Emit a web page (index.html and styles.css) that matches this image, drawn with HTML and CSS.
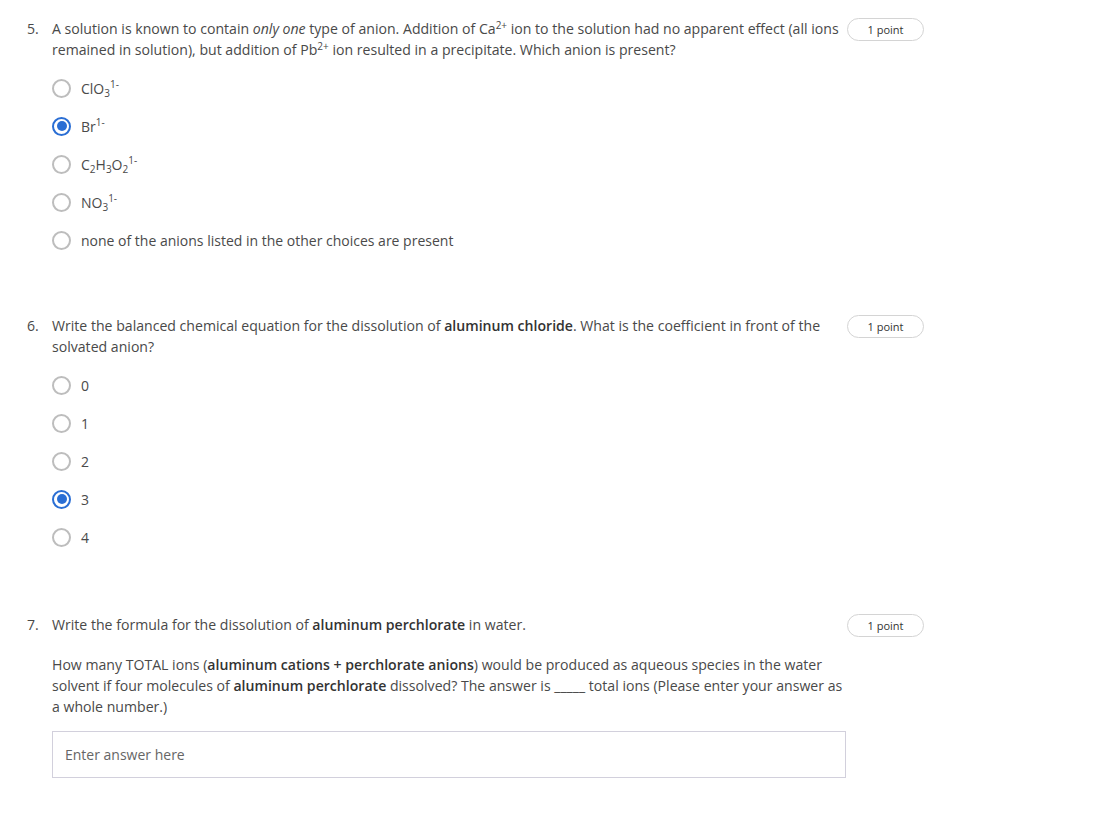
FILE: index.html
```
<!DOCTYPE html>
<html>
<head>
<meta charset="utf-8">
<link rel="stylesheet" href="styles.css">
</head>
<body>
<div class="page">
  <div class="question q5">
    <div class="num">5.</div>
    <div class="qbody">
      <div class="qtext">A solution is known to contain <i>only one</i> type of anion. Addition of Ca<sup>2+</sup> ion to the solution had no apparent effect (all ions remained in solution), but addition of Pb<sup>2+</sup> ion resulted in a precipitate. Which anion is present?</div>
      <div class="options">
        <div class="opt"><span class="radio"></span><span class="label">ClO<sub>3</sub><sup>1-</sup></span></div>
        <div class="opt"><span class="radio on"></span><span class="label">Br<sup>1-</sup></span></div>
        <div class="opt"><span class="radio"></span><span class="label">C<sub>2</sub>H<sub>3</sub>O<sub>2</sub><sup>1-</sup></span></div>
        <div class="opt"><span class="radio"></span><span class="label">NO<sub>3</sub><sup>1-</sup></span></div>
        <div class="opt"><span class="radio"></span><span class="label">none of the anions listed in the other choices are present</span></div>
      </div>
    </div>
    <div class="points">1 point</div>
  </div>

  <div class="question q6">
    <div class="num">6.</div>
    <div class="qbody">
      <div class="qtext">Write the balanced chemical equation for the dissolution of <b>aluminum chloride</b>. What is the coefficient in front of the solvated anion?</div>
      <div class="options">
        <div class="opt"><span class="radio"></span><span class="label">0</span></div>
        <div class="opt"><span class="radio"></span><span class="label">1</span></div>
        <div class="opt"><span class="radio"></span><span class="label">2</span></div>
        <div class="opt"><span class="radio on"></span><span class="label">3</span></div>
        <div class="opt"><span class="radio"></span><span class="label">4</span></div>
      </div>
    </div>
    <div class="points">1 point</div>
  </div>

  <div class="question q7">
    <div class="num">7.</div>
    <div class="qbody">
      <div class="qtext">Write the formula for the dissolution of <b>aluminum perchlorate</b> in water.</div>
      <div class="qtext para">How many TOTAL ions (<b>aluminum cations + perchlorate anions</b>) would be produced as aqueous species in the water solvent if four molecules of <b>aluminum perchlorate</b> dissolved? The answer is _____ total ions (Please enter your answer as a whole number.)</div>
      <div class="answer">Enter answer here</div>
    </div>
    <div class="points">1 point</div>
  </div>
</div>
</body>
</html>
```
FILE: styles.css
```
html, body {
  margin: 0;
  padding: 0;
  background: #fff;
}
body {
  font-family: "Open Sans", "Liberation Sans", sans-serif;
  font-size: 14.1px;
  line-height: 21px;
  color: #494949;
}
.page {
  padding: 18px 0 0 27px;
}
.question {
  display: flex;
  align-items: flex-start;
  margin-bottom: 56px;
}
.q6 {
  margin-bottom: 58px;
}
.num {
  width: 25px;
  flex: none;
}
.qbody {
  width: 795px;
  flex: none;
}
.qtext b {
  font-weight: 600;
  color: #333;
}
.qtext sup {
  font-size: 10px;
  line-height: 0;
  vertical-align: 5px;
}
.options {
  margin-top: 9px;
}
.opt {
  display: flex;
  align-items: center;
  height: 38px;
}
.radio {
  box-sizing: border-box;
  width: 19px;
  height: 19px;
  border: 2px solid #bdbdbd;
  border-radius: 50%;
  margin-right: 10px;
  flex: none;
  position: relative;
}
.radio.on {
  border-color: #2a6ed4;
}
.radio.on::after {
  content: "";
  position: absolute;
  left: 2.5px;
  top: 2.5px;
  width: 10px;
  height: 10px;
  border-radius: 50%;
  background: #2a6ed4;
}
.label {
  font-size: 14px;
  color: #4a4a4a;
}
.label sub {
  font-size: 10px;
  line-height: 0;
  vertical-align: -3px;
}
.label sup {
  font-size: 10px;
  line-height: 0;
  vertical-align: 6px;
}
.points {
  flex: none;
  box-sizing: border-box;
  width: 77px;
  height: 23px;
  border: 1px solid #d4d4d4;
  border-radius: 12px;
  font-size: 11px;
  line-height: 21px;
  text-align: center;
  color: #333;
}
.para {
  margin-top: 19px;
}
.answer {
  margin-top: 14px;
  box-sizing: border-box;
  width: 794px;
  height: 47px;
  border: 1px solid #d2d0dc;
  padding-left: 12px;
  line-height: 45px;
  color: #666;
  font-size: 14px;
}
```
